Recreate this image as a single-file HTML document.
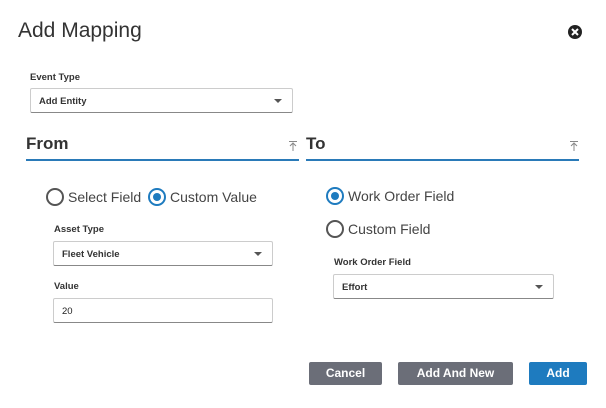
<!DOCTYPE html>
<html><head><style>
body{margin:0;width:606px;height:408px;background:#fff;font-family:"Liberation Sans",sans-serif;color:#333;position:relative;overflow:hidden}
.a{position:absolute}
.t{left:18px;top:19px;font-size:21px;color:#333}
.lbl{font-size:9.5px;font-weight:bold;color:#333}
.sel{border:1px solid #ccc;border-bottom:1px solid #888;border-radius:2px;box-sizing:border-box;height:25px;font-size:9.5px;font-weight:bold;padding:7px 0 0 8px;color:#333}
.dd:after{content:"";position:absolute;right:10px;top:10px;border-left:4px solid transparent;border-right:4px solid transparent;border-top:4px solid #555}
.h{font-size:17px;font-weight:bold;color:#333}
.line{height:2px;background:#2a7ab8}
.r{width:14px;height:14px;border:2px solid #555;border-radius:50%}
.r.on{border-color:#1e7bbf}
.r.on:after{content:"";position:absolute;left:3px;top:3px;width:8px;height:8px;border-radius:50%;background:#1e7bbf}
.rt{font-size:14px;color:#444}
.btn{height:23px;border-radius:2px;color:#fff;font-size:12px;font-weight:bold;text-align:center;line-height:23px;background:#6b6e78}
</style></head><body>
<div class="a t">Add Mapping</div>
<svg class="a" style="left:567px;top:24px" width="16" height="16"><circle cx="8" cy="8" r="7" fill="#222"/><path d="M5 5L11 11M11 5L5 11" stroke="#fff" stroke-width="2"/></svg>
<div class="a lbl" style="left:30px;top:72px">Event Type</div>
<div class="a sel dd" style="left:30px;top:88px;width:263px">Add Entity</div>

<div class="a h" style="left:26px;top:134px">From</div>
<svg class="a" style="left:288px;top:140px" width="10" height="12"><path d="M1 1.5H9M5 3V11M2 6L5 3L8 6" stroke="#888" fill="none" stroke-width="1"/></svg>
<div class="a line" style="left:26px;top:159px;width:273px"></div>
<div class="a h" style="left:306px;top:134px">To</div>
<svg class="a" style="left:569px;top:140px" width="10" height="12"><path d="M1 1.5H9M5 3V11M2 6L5 3L8 6" stroke="#888" fill="none" stroke-width="1"/></svg>
<div class="a line" style="left:306px;top:159px;width:273px"></div>

<div class="a r" style="left:46px;top:188px"></div>
<div class="a rt" style="left:68px;top:189px">Select Field</div>
<div class="a r on" style="left:148px;top:188px"></div>
<div class="a rt" style="left:170px;top:189px">Custom Value</div>

<div class="a lbl" style="left:54px;top:224px">Asset Type</div>
<div class="a sel dd" style="left:53px;top:241px;width:220px">Fleet Vehicle</div>
<div class="a lbl" style="left:54px;top:281px">Value</div>
<div class="a sel" style="left:53px;top:298px;width:220px;font-weight:normal;color:#222">20</div>

<div class="a r on" style="left:326px;top:187px"></div>
<div class="a rt" style="left:348px;top:188px">Work Order Field</div>
<div class="a r" style="left:326px;top:220px"></div>
<div class="a rt" style="left:348px;top:221px">Custom Field</div>
<div class="a lbl" style="left:334px;top:257px">Work Order Field</div>
<div class="a sel dd" style="left:333px;top:274px;width:221px">Effort</div>

<div class="a btn" style="left:309px;top:362px;width:73px">Cancel</div>
<div class="a btn" style="left:398px;top:362px;width:115px">Add And New</div>
<div class="a btn" style="left:529px;top:362px;width:58px;background:#1e7bbf">Add</div>
</body></html>
